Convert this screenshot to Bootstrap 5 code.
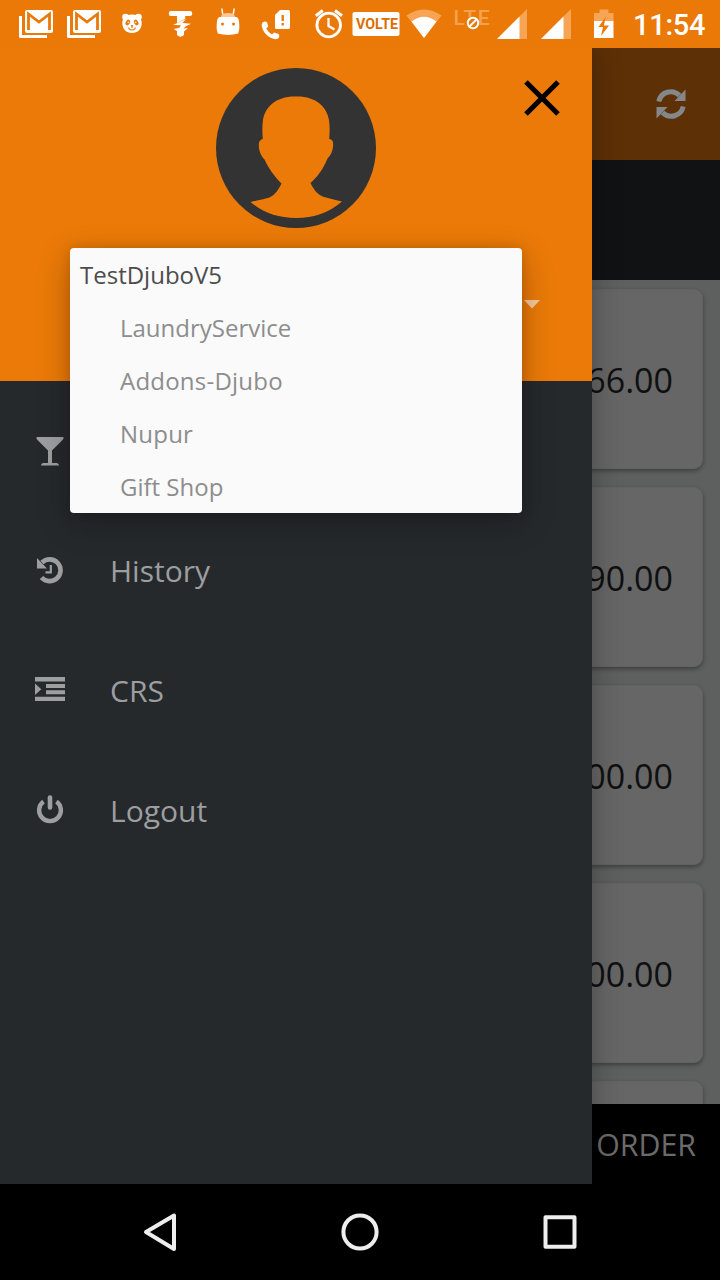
<!DOCTYPE html>
<html lang="en">
<head>
<meta charset="utf-8">
<meta name="viewport" content="width=device-width, initial-scale=1">
<title>Djubo</title>
<link rel="stylesheet" href="https://cdn.jsdelivr.net/npm/bootstrap@5.3.0/dist/css/bootstrap.min.css">
<style>
  body { font-family: "Open Sans", "Noto Sans", sans-serif; background: #000; width: 720px; height: 1280px; overflow: hidden; line-height: 1.362; }
  svg { display: block; flex: none; }
  .statusbar { height: 48px; background: #ea7907; padding-left: 12px; }
  .clock { font: 500 29px/51px Roboto, sans-serif; margin-left: 5px; letter-spacing: -.25px; }
  .stage { height: 1136px; background: #5d605f; }
  .appbar { height: 112px; background: #5e3006; padding-right: 32px; }
  .band { height: 120px; background: #101213; }
  .orders { height: 824px; padding: 9px 17px 0 0; gap: 18px; }
  .order-card { height: 180px; background: #666; border-radius: 9px; border: 1px solid #616261; box-shadow: 0 2px 4px rgba(0,0,0,.35); font-size: 34px; color: #101010; padding: 2px 29px 0 0; }
  .orderbar { height: 80px; background: #000; color: #6b6b6b; font-size: 30.3px; padding: 2px 24px 0 0; }
  .drawer { width: 592px; background: #25292c; box-shadow: 0 0 28px rgba(0,0,0,.3); }
  .drawer-head { height: 333px; background: #eb7a08; }
  .avatar { padding-top: 20px; }
  .close-x { top: 30px; right: 30px; }
  .caret { top: 252px; left: 524px; }
  .menu-list { padding-top: 10px; }
  .menu-row { height: 120px; font-size: 30px; color: #9d9ea0; }
  .menu-row svg { margin: 0 40px 0 30px; }
  .picker { left: 70px; top: 200px; width: 452px; background: #fafafa; border-radius: 4px; box-shadow: 0 10px 32px rgba(10,0,10,.28), 0 0 12px rgba(0,0,0,.12); font-size: 24px; color: #8d8d8d; }
  .picker-item { height: 53px; padding: 2px 10px 0 50px; }
  .picker-top { padding-left: 10px; color: #4c4c4c; }
  .looser { letter-spacing: .22px; }
  .sysnav { height: 96px; padding: 0 100px; }
</style>
</head>
<body>
<header class="statusbar d-flex text-white">
  <svg width="48" height="48" viewBox="12 0 48 48"><path d="M20.500 16v20.500H47" fill="none" stroke="#fff" stroke-width="3" stroke-linejoin="round"/><rect x="25" y="10" width="28" height="23" rx="2" fill="#fff"/><path d="M28.500 30V14l10.500 8 10.500-8v16" fill="none" stroke="#ea7907" stroke-width="2.800"/></svg>
  <svg width="48" height="48" viewBox="12 0 48 48"><path d="M20.500 16v20.500H47" fill="none" stroke="#fff" stroke-width="3" stroke-linejoin="round"/><rect x="25" y="10" width="28" height="23" rx="2" fill="#fff"/><path d="M28.500 30V14l10.500 8 10.500-8v16" fill="none" stroke="#ea7907" stroke-width="2.800"/></svg>
  <svg width="48" height="48" viewBox="108 0 48 48"><g fill="#fff"><circle cx="125.500" cy="17" r="3.300"/><circle cx="138.500" cy="17" r="3.300"/><path d="M132 14.500c6 0 9.500 3 9.700 8.500.2 6-4 10-9.700 10s-9.900-4-9.700-10c.2-5.500 3.700-8.500 9.700-8.500z"/></g><g fill="#ea7907"><ellipse cx="127.800" cy="22.500" rx="2" ry="3" transform="rotate(30 127.800 22.500)"/><ellipse cx="136.200" cy="22.500" rx="2" ry="3" transform="rotate(-30 136.200 22.500)"/><path d="M130.500 25h3l-1.500 2z"/></g><path d="M128.500 27.500q.5 2.500 3.500 2.500t3.500-2.500M132 26v2" fill="none" stroke="#ea7907" stroke-width="1.100"/><circle cx="128.300" cy="22.300" r=".8" fill="#fff"/><circle cx="135.700" cy="22.300" r=".8" fill="#fff"/></svg>
  <svg width="48" height="48" viewBox="156 0 48 48"><g fill="#fff"><rect x="168.800" y="11" width="23.400" height="5" rx="2.200"/><path d="M177 15h8l.3 3.800-8.300 4.200zM173 25l13-6-3.500 4 8.700.7-13.200 6 3-4.500zM173.500 29l5-1 8-2.500-3 3 4.500-.5-4 3.500v3.500q-3.500 3.500-7 0V31z"/></g></svg>
  <svg width="48" height="48" viewBox="204 0 48 48"><path d="M221.800 8.500l1 6M234.200 8.500l-1 6" stroke="#fff" stroke-width="1.500"/><path d="M221 17q0-4 7-4t7 4z" fill="#f9c798"/><path d="M219.500 17h17q2 .5 2.600 5 .8 8-1 11.500-10 2.800-20.200 0-1.800-3.500-1-11.500.600-4.500 2.600-5z" fill="#fff"/><circle cx="222.500" cy="24" r="1.500" fill="#ea7907"/><circle cx="233.500" cy="24" r="1.500" fill="#ea7907"/></svg>
  <svg width="48" height="48" viewBox="252 0 48 48"><path d="M262.500 22.500q3-1.800 4.500-.2l1.300 4.200-2 2q2 4 5.700 6l2-2 4.500 1.500q1.800 2-.3 4.500-3 1.500-7-.5-8-4-9.500-12-.2-2.500.8-3.500z" fill="#fff"/><path d="M280 10h8.500q1.500 0 1.500 1.500v16q0 1.500-1.500 1.500h-12q-1.500 0-1.500-1.500V15z" fill="#fff"/><path d="M282.700 15v6m0 2v2.500" stroke="#ea7907" stroke-width="2.300"/></svg>
  <svg width="48" height="48" viewBox="300 0 48 48"><g fill="none" stroke="#fff"><circle cx="328.700" cy="25" r="11.800" stroke-width="2.800"/><path d="M315.800 15.800l7-5.300M342 15.800l-7-5.300" stroke-width="3"/><path d="M328.500 18v8l6 3.500" stroke-width="2.300"/></g></svg>
  <svg width="56" height="48" viewBox="348 0 56 48"><rect x="352.500" y="12" width="47" height="24" rx="2" fill="#fff"/><text x="356" y="29" font-family="Roboto" font-weight="700" font-size="14.500" textLength="42" lengthAdjust="spacingAndGlyphs" fill="#d96f05">VOLTE</text></svg>
  <svg width="40" height="48" viewBox="404 0 40 48"><path d="M406.500 15.500q17.500-12 35 0L424 38z" fill="#f7a455"/><path d="M411.500 21.500q12.500-9.500 25 0L424 38z" fill="#fff"/></svg>
  <svg width="48" height="48" viewBox="444 0 48 48"><text x="453.500" y="25" font-family="Roboto" font-weight="500" font-size="21" textLength="36" fill="#f5a14f">LTE</text><circle cx="473" cy="23" r="5.200" fill="#ea7907" stroke="#fff" stroke-width="2"/><path d="M469.500 26.500l7-7" stroke="#fff" stroke-width="2"/></svg>
  <svg width="44" height="48" viewBox="492 0 44 48"><path d="M527 9v30h-30z" fill="#f7a455"/><path d="M519.500 16.500V39H497z" fill="#fff"/></svg>
  <svg width="44" height="48" viewBox="492 0 44 48"><path d="M527 9v30h-30z" fill="#f7a455"/><path d="M519.500 16.500V39H497z" fill="#fff"/></svg>
  <svg width="48" height="48" viewBox="580 0 48 48"><path d="M594 21v-8h5.500V9.500h9V13h5v8z" fill="#f7a455"/><path d="M594 21h19.500v17H594z" fill="#fff"/><path d="M605.500 17l-7 10h4.500l-2 9 8-10.500h-5z" fill="#ea7907"/></svg>
  <span class="clock">11:54</span>
</header>

<main class="stage position-relative overflow-hidden">
  <div class="appbar d-flex align-items-center justify-content-end">
    <svg width="34" height="34" viewBox="-17 -17 34 34"><g id="half"><path d="M-12.200-2.500A12.200 12.200 0 0 1 8.500-8.500" fill="none" stroke="#85888a" stroke-width="5"/><path d="M14.500-14.500V-3H3.500z" fill="#85888a"/></g><use href="#half" transform="rotate(180)"/></svg>
  </div>
  <div class="band"></div>
  <div class="orders d-flex flex-column overflow-hidden">
    <div class="order-card flex-shrink-0 d-flex align-items-center justify-content-end">66.00</div>
    <div class="order-card flex-shrink-0 d-flex align-items-center justify-content-end">90.00</div>
    <div class="order-card flex-shrink-0 d-flex align-items-center justify-content-end">00.00</div>
    <div class="order-card flex-shrink-0 d-flex align-items-center justify-content-end">00.00</div>
    <div class="order-card flex-shrink-0"></div>
  </div>
  <div class="orderbar d-flex align-items-center justify-content-end">ORDER</div>

  <aside class="drawer position-absolute top-0 start-0 h-100">
    <div class="drawer-head position-relative">
      <div class="avatar d-flex justify-content-center">
        <svg width="160" height="160" viewBox="0 0 160 160"><circle cx="80" cy="80" r="80" fill="#333"/><path d="M80 28.500C100 28 111 39 113 52c1 7 .7 13 .2 19 4 .5 4.300 4 3.800 8-.8 6-3 9-5.500 11.500C107 102 101 109 94.500 115c3 6 6 10.500 12 13.500 6 2 12 3 19.500 5Q107 150 80 150T34.500 134c7.500-2 13-2.500 19-4.500 6-3 9-8 12-14C58 108 53 101 48.500 91.500 46 89 44 86 43 80c-.5-4-.2-8 3.800-9-.5-6-.8-12 .2-19C49 39 60 28 80 28.500z" fill="#eb7a08"/></svg>
      </div>
      <svg class="close-x position-absolute" width="40" height="40" viewBox="0 0 40 40"><path d="M4 4l32 32M36 4L4 36" stroke="#000" stroke-width="5"/></svg>
      <svg class="caret position-absolute" width="17" height="9" viewBox="0 0 17 9"><path d="M0 0h16L8 8.500z" fill="#f7c89b"/></svg>
    </div>
    <nav class="menu-list">
      <div class="menu-row d-flex align-items-center"><svg width="40" height="40" viewBox="30 431 40 40"><path d="M37 437h26q1.500 1-.5 3L52 450.500V463h5q2 .8 2 2.600H41q0-1.800 2-2.600h5v-12.500L37.500 440q-2-2-.5-3z" fill="#9d9ea0"/></svg></div>
      <div class="menu-row d-flex align-items-center"><svg width="40" height="40" viewBox="30 551 40 40"><g fill="none" stroke="#9d9ea0"><path d="M42 562.500A10.900 10.900 0 1 1 41.500 577.500" stroke-width="4.600"/><path d="M50.800 565v7.300H45.500" stroke-width="2.200"/></g><path d="M37 558v10.500h10z" fill="#9d9ea0"/></svg>History</div>
      <div class="menu-row d-flex align-items-center"><svg width="40" height="40" viewBox="30 671 40 40"><path d="M35 677h30v4.500H35zM46 684h19v4H46zM46 690.300h19v4H46zM35 696.800h30v4.200H35zM35 683.500l6.300 5.700-6.300 5.700z" fill="#9d9ea0"/></svg>CRS</div>
      <div class="menu-row d-flex align-items-center"><svg width="40" height="40" viewBox="30 791 40 40"><g fill="none" stroke="#9d9ea0" stroke-linecap="round"><path d="M43.500 801.500a10.900 10.900 0 1 0 13 0" stroke-width="4.400" stroke-linecap="butt"/><path d="M50 797.500v10" stroke-width="4.600"/></g></svg>Logout</div>
    </nav>
    <div class="picker position-absolute">
      <div class="picker-item picker-top d-flex align-items-center">TestDjuboV5</div>
      <div class="picker-item d-flex align-items-center">LaundryService</div>
      <div class="picker-item d-flex align-items-center looser">Addons-Djubo</div>
      <div class="picker-item d-flex align-items-center looser">Nupur</div>
      <div class="picker-item d-flex align-items-center">Gift Shop</div>
    </div>
  </aside>
</main>

<footer class="sysnav d-flex justify-content-between bg-black">
  <svg width="120" height="96" viewBox="100 1184 120 96"><path d="M174 1215.500v33.500L146 1232z" fill="none" stroke="#eee" stroke-width="4" stroke-linejoin="round"/></svg>
  <svg width="120" height="96" viewBox="300 1184 120 96"><circle cx="360" cy="1232" r="16.600" fill="none" stroke="#eee" stroke-width="4"/></svg>
  <svg width="120" height="96" viewBox="500 1184 120 96"><rect x="545.500" y="1217.300" width="29" height="29.400" fill="none" stroke="#eee" stroke-width="4" stroke-linejoin="round"/></svg>
</footer>
<script src="https://cdn.jsdelivr.net/npm/bootstrap@5.3.0/dist/js/bootstrap.bundle.min.js"></script>
</body>
</html>
